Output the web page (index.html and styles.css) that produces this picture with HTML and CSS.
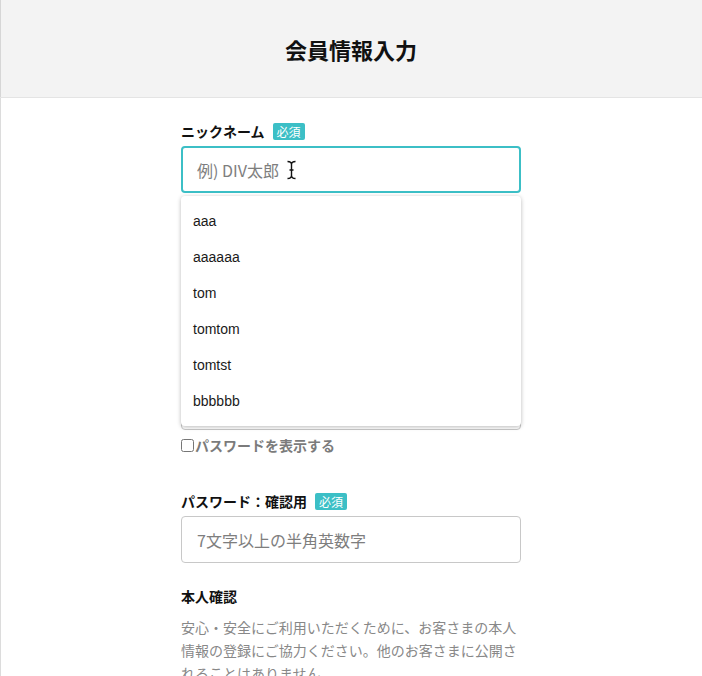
FILE: index.html
```html
<!DOCTYPE html>
<html lang="ja">
<head>
    <meta charset="UTF-8">
    <title>会員情報入力</title>
    <link rel="stylesheet" href="styles.css">
</head>
<body>
    <div class="page">
        <header class="page-header">
            <h1>会員情報入力</h1>
        </header>

        <form class="form">
            <div class="field field-nickname">
                <label class="field-label" for="nickname">ニックネーム<span class="required">必須</span></label>
                <div class="input-wrap">
                    <input class="text-input is-focused" id="nickname" type="text" placeholder="例) DIV太郎" autocomplete="on">
                    <!-- mouse pointer sitting in the field -->
                    <svg class="ibeam" width="11" height="20" viewBox="0 0 11 20">
                        <path d="M1.5 1.5 Q5.5 1.5 5.5 4.5 L5.5 15.5 Q5.5 18.5 1.5 18.5 M9.5 1.5 Q5.5 1.5 5.5 4.5 M5.5 15.5 Q5.5 18.5 9.5 18.5 M3.5 10 L7.5 10" fill="none" stroke="#111" stroke-width="1.4"/>
                    </svg>
                    <ul class="suggest">
                        <li>aaa</li>
                        <li>aaaaaa</li>
                        <li>tom</li>
                        <li>tomtom</li>
                        <li>tomtst</li>
                        <li>bbbbbb</li>
                    </ul>
                </div>
            </div>

            <div class="field">
                <label class="field-label" for="email">メールアドレス<span class="required">必須</span></label>
                <input class="text-input" id="email" type="email">
            </div>

            <div class="field field-password">
                <label class="field-label" for="password">パスワード<span class="required">必須</span></label>
                <p class="field-note">7文字以上の半角英数字で入力してください</p>
                <input class="text-input" id="password" type="password">
                <label class="show-pass"><input type="checkbox">パスワードを表示する</label>
            </div>

            <div class="field field-confirm">
                <label class="field-label" for="password2">パスワード：確認用<span class="required">必須</span></label>
                <input class="text-input" id="password2" type="password" placeholder="7文字以上の半角英数字">
            </div>

            <div class="field">
                <h2 class="field-label">本人確認</h2>
                <p class="description">安心・安全にご利用いただくために、お客さまの本人情報の登録にご協力ください。他のお客さまに公開されることはありません。</p>
            </div>
        </form>
    </div>
</body>
</html>
```

FILE: styles.css
```css
body {
    margin: 0;
    font-family: "Noto Sans CJK JP", "Noto Sans", sans-serif;
    color: #222;
    background: #fff;
}
.page {
    min-height: 100vh;
    box-shadow: inset 1px 0 #dcdcdc;
}
.page-header {
    height: 97px;
    background-color: #f3f3f3;
    border-bottom: 1px solid #e4e4e4;
    box-shadow: inset 1px 0 #d6d6d6;
    display: flex;
    align-items: center;
    justify-content: center;
}
.page-header h1 {
    margin: 0;
    font-size: 22px;
    font-weight: bold;
    color: #111;
}
.form {
    width: 340px;
    margin: 0 auto;
    padding-top: 23px;
}
.field {
    margin-bottom: 28px;
}
.field-label {
    display: flex;
    align-items: center;
    height: 20px;
    margin: 0 0 5px;
    font-size: 14px;
    font-weight: bold;
    color: #111;
}
.required {
    margin-left: 8px;
    padding: 0 4px;
    height: 17px;
    line-height: 17px;
    border-radius: 2px;
    background-color: #3cbfc6;
    color: #fff;
    font-size: 12px;
    font-weight: normal;
}
.input-wrap {
    position: relative;
}
.text-input {
    display: block;
    width: 100%;
    height: 47px;
    box-sizing: border-box;
    padding: 0 15px;
    border: 1px solid #c8c8c8;
    border-radius: 4px;
    font-family: inherit;
    font-size: 16px;
    color: #222;
    outline: none;
}
.text-input.is-focused {
    border: 2px solid #3cbfc6;
    padding: 0 14px;
}
.text-input::placeholder {
    color: #7e7e7e;
}
.ibeam {
    position: absolute;
    left: 105px;
    top: 14px;
}
.suggest {
    position: absolute;
    top: 50px;
    left: 0;
    right: 0;
    z-index: 2;
    margin: 0;
    padding: 7px 0;
    list-style: none;
    background: #fff;
    border-radius: 4px;
    box-shadow: 0 1px 4px rgba(0, 0, 0, 0.28);
}
.suggest li {
    height: 36px;
    line-height: 36px;
    padding: 0 12px;
    font-family: "Liberation Sans", Arial, sans-serif;
    font-size: 14px;
    color: #1a1a1a;
}
.field-note {
    margin: 0 0 14px;
    font-size: 13px;
    line-height: 23px;
    color: #888;
}
.field-password {
    margin-bottom: 36px;
}
.field-confirm {
    margin-bottom: 23px;
}
.show-pass {
    display: flex;
    align-items: center;
    height: 20px;
    margin-top: 5px;
    font-size: 14px;
    font-weight: bold;
    color: #7b7b7b;
}
.show-pass input {
    width: 13px;
    height: 13px;
    margin: 0 1px 0 0;
}
.description {
    margin: 10px 0 0;
    font-size: 14px;
    line-height: 23px;
    color: #888;
}
```
